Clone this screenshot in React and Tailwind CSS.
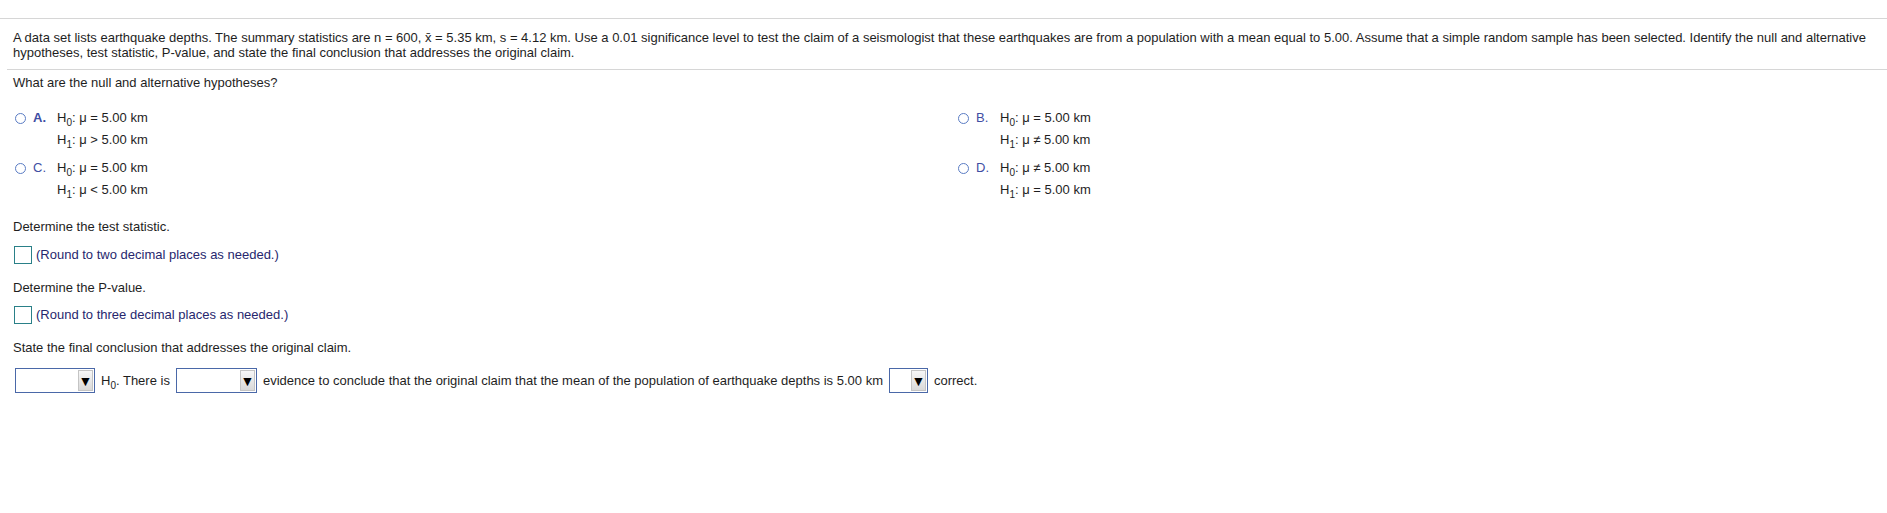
import React from "react";

function Sub({ children }) {
  return <sub className="text-[10px] bottom-[-4px]">{children}</sub>;
}

function Radio() {
  return <span className="inline-block w-[11px] h-[11px] rounded-full border border-[#5a7cc4] bg-white shrink-0" />;
}

function Option({ letter, bold, h0, h1 }) {
  return (
    <div className="flex items-start">
      <div className="h-[22px] flex items-center">
        <Radio />
      </div>
      <span className={"ml-[7px] w-[24px] text-[#3f4ea3] leading-[22px] " + (bold ? "font-bold" : "")}>{letter}.</span>
      <div className="leading-[22px]">
        <div>
          H<Sub>0</Sub>: μ {h0} 5.00 km
        </div>
        <div>
          H<Sub>1</Sub>: μ {h1} 5.00 km
        </div>
      </div>
    </div>
  );
}

function Select({ w }) {
  return (
    <span className={"inline-flex items-center justify-end h-[25px] border border-[#4a68a8] bg-white pr-[1px] " + w}>
      <span className="flex items-center justify-center w-[15px] h-[21px] border border-[#c4c4c4] bg-gradient-to-b from-[#f7f7f7] to-[#d9d9d9] text-[14px] leading-none text-black">
        ▼
      </span>
    </span>
  );
}

function InputBox() {
  return <span className="inline-block w-[18px] h-[18px] border border-[#2a8088] bg-white shrink-0" />;
}

export default function App() {
  return (
    <div className="w-full h-[513px] bg-white font-['Liberation_Sans',Arial,sans-serif] text-[13px] text-[#1e1e1e]">
      <div className="h-[18px]" />
      <div className="border-t border-[#d6d6d6]" />
      <div className="px-[13px] pt-[11px] leading-[15px]">
        A data set lists earthquake depths. The summary statistics are n = 600, x̄ = 5.35 km, s = 4.12 km. Use a 0.01 significance level to test the claim of a seismologist that these earthquakes are from a population with a mean equal to 5.00. Assume that a simple random sample has been selected. Identify the null and alternative hypotheses, test statistic, P-value, and state the final conclusion that addresses the original claim.
      </div>
      <div className="ml-[7px] mt-[9px] border-t border-[#d6d6d6]" />
      <div className="px-[13px] pt-[5px] leading-[15px]">What are the null and alternative hypotheses?</div>

      <div className="mt-[17px] ml-[15px] grid grid-cols-[943px_1fr] gap-y-[6px]">
        <Option letter="A" bold h0="=" h1=">" />
        <Option letter="B" h0="=" h1="≠" />
        <Option letter="C" h0="=" h1="<" />
        <Option letter="D" h0="≠" h1="=" />
      </div>

      <div className="px-[13px] mt-[18px] leading-[15px]">Determine the test statistic.</div>
      <div className="ml-[14px] mt-[12px] flex items-center gap-[4px] h-[18px]">
        <InputBox />
        <span className="text-[#27276e]">(Round to two decimal places as needed.)</span>
      </div>

      <div className="px-[13px] mt-[16px] leading-[15px]">Determine the P-value.</div>
      <div className="ml-[14px] mt-[11px] flex items-center gap-[4px] h-[18px]">
        <InputBox />
        <span className="text-[#27276e]">(Round to three decimal places as needed.)</span>
      </div>

      <div className="px-[13px] mt-[16px] leading-[15px]">State the final conclusion that addresses the original claim.</div>

      <div className="ml-[15px] mt-[13px] flex items-center gap-[6px]">
        <Select w="w-[80px]" />
        <span>
          H<Sub>0</Sub>. There is
        </span>
        <Select w="w-[81px]" />
        <span>evidence to conclude that the original claim that the mean of the population of earthquake depths is 5.00 km</span>
        <Select w="w-[39px]" />
        <span>correct.</span>
      </div>
    </div>
  );
}
